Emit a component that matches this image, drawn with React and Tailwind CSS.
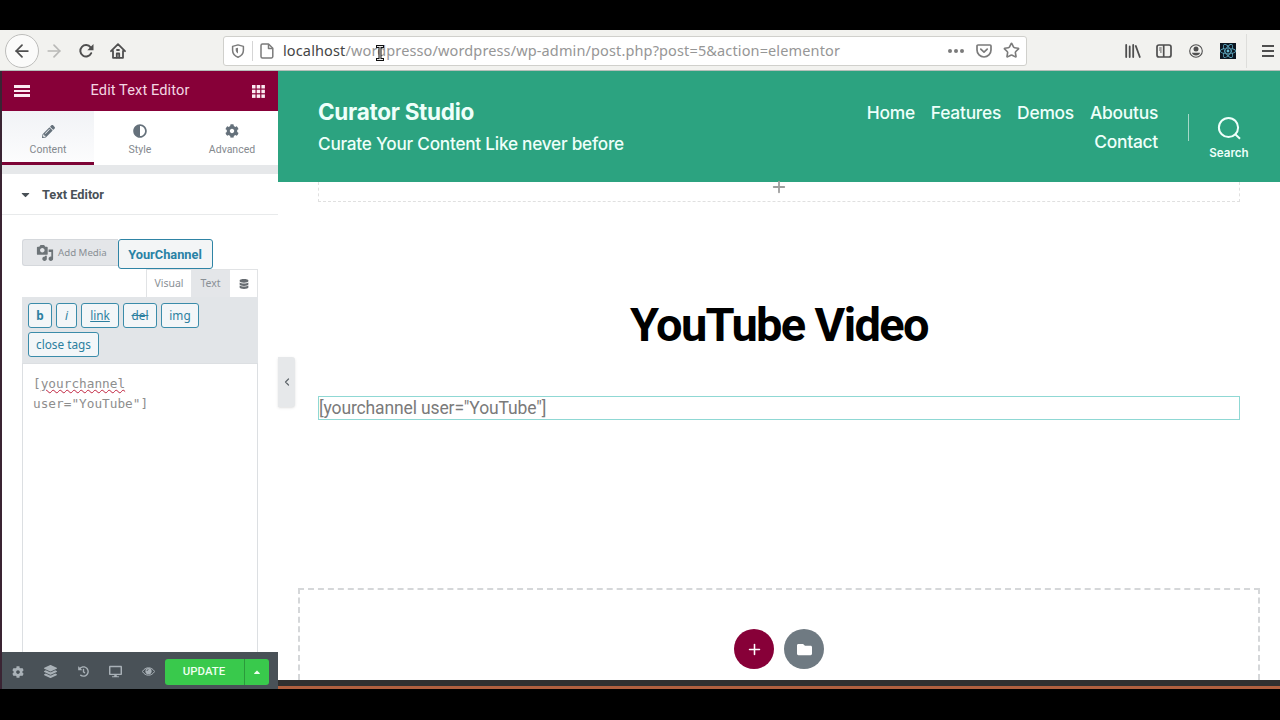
import {
  FaAdjust,
  FaCaretDown,
  FaCaretUp,
  FaCog,
  FaDatabase,
  FaDesktop,
  FaFolder,
  FaHistory,
  FaLayerGroup,
  FaPencilAlt,
  FaReact,
} from "react-icons/fa";
import { ArrowLeft, ArrowRight, ChevronLeft, Plus, Star } from "lucide-react";

const EyeIcon = () => (
  <svg width="13" height="9" viewBox="0 0 13 9">
    <path d="M.4 4.5C2 2 4 .8 6.5.8S11 2 12.6 4.5C11 7 9 8.2 6.5 8.2S2 7 .4 4.5z" fill="none" stroke="currentColor" strokeWidth="1" />
    <circle cx="6.5" cy="4.2" r="3.1" fill="currentColor" />
    <path d="M5 4a1.5 1.5 0 0 1 1.5-1.5" fill="none" stroke="#495157" strokeWidth=".8" />
  </svg>
);

const tabs = [
  { id: "content", label: "Content", icon: <FaPencilAlt size={13} /> },
  { id: "style", label: "Style", icon: <FaAdjust size={14} /> },
  { id: "advanced", label: "Advanced", icon: <FaCog size={14} /> },
];

const quickTags = [
  { label: "b", className: "w-[24px] font-bold" },
  { label: "i", className: "w-[21px] italic" },
  { label: "link", className: "w-[38px] underline" },
  { label: "del", className: "w-[34px] line-through" },
  { label: "img", className: "w-[38px]" },
  { label: "close tags", className: "w-[71px]" },
];

const footerIcons = [
  { id: "settings", icon: <FaCog size={12} /> },
  { id: "navigator", icon: <FaLayerGroup size={13} /> },
  { id: "history", icon: <FaHistory size={11} /> },
  { id: "responsive", icon: <FaDesktop size={13} /> },
  { id: "preview", icon: <EyeIcon /> },
];

const menu = ["Home", "Features", "Demos", "Aboutus", "Contact"];

const ReloadIcon = () => (
  <svg width="16" height="16" viewBox="0 0 16 16" fill="none" stroke="currentColor" strokeWidth="2">
    <path d="M13.2 10.2A5.7 5.7 0 1 1 12.6 4.4" strokeLinecap="round" />
    <path d="M15.5 1v6.2H9.3z" fill="currentColor" stroke="none" />
  </svg>
);

const HomeIcon = () => (
  <svg width="16" height="16" viewBox="0 0 16 16" fill="none" stroke="currentColor" strokeWidth="1.8" strokeLinejoin="round" strokeLinecap="round">
    <path d="M1 8.2 8 1.2l7 7M3 8v6.8h10V8" />
    <path d="M6.8 14.5v-4h2.4v4" />
    <path d="M7 7h2" />
  </svg>
);

const ShieldIcon = () => (
  <svg width="14" height="14" viewBox="0 0 14 14" fill="none" stroke="currentColor" strokeWidth="1.5" strokeLinejoin="round">
    <path d="M7 .9 12.4 2.4v3.8c0 3.3-2 5.6-5.4 7-3.4-1.4-5.4-3.7-5.4-7V2.4z" />
    <path d="M7 3.8v5.8C5.5 8.6 4.7 7.4 4.7 5.8V4.3z" fill="currentColor" stroke="none" />
  </svg>
);

const PageIcon = () => (
  <svg width="14" height="16" viewBox="0 0 14 16" fill="none" stroke="currentColor" strokeWidth="1.5" strokeLinejoin="round">
    <path d="M2.5 1h6l4.3 4.2v8.3a1.5 1.5 0 0 1-1.5 1.5H2.5A1.5 1.5 0 0 1 1 13.5v-11A1.5 1.5 0 0 1 2.5 1z" />
    <path d="M8.5 1.2v4.3h4.2" />
  </svg>
);

const PocketIcon = () => (
  <svg width="16" height="14" viewBox="0 0 16 14" fill="none" stroke="currentColor" strokeWidth="1.7" strokeLinejoin="round" strokeLinecap="round">
    <path d="M2 1h12a1 1 0 0 1 1 1v4a7 7 0 0 1-14 0V2a1 1 0 0 1 1-1z" />
    <path d="m4.8 5.2 3.2 3 3.2-3" />
  </svg>
);

const LibraryIcon = () => (
  <svg width="16" height="14" viewBox="0 0 16 14" fill="none" stroke="currentColor" strokeWidth="1.8" strokeLinecap="round">
    <path d="M1.2 1v12M4.7 2.500V13M8.2 1v12M10.8 2l4 11" />
  </svg>
);

const SidebarIcon = () => (
  <svg width="16" height="14" viewBox="0 0 16 14" fill="none" stroke="currentColor" strokeWidth="1.7">
    <rect x="1" y="1" width="14" height="12" rx="2" />
    <path d="M7.7 1v12" />
    <path d="M3.2 4h2.5M3.2 6h2.5M4 8h1.7" strokeWidth="1" />
  </svg>
);

const AccountIcon = () => (
  <svg width="14" height="14" viewBox="0 0 14 14">
    <circle cx="7" cy="7" r="6.3" fill="none" stroke="currentColor" strokeWidth="1.1" />
    <circle cx="7" cy="5" r="2.5" fill="currentColor" />
    <path d="M2.9 8.8h8.2c-.6 1.7-2 2.6-4.1 2.6S3.5 10.5 2.9 8.8z" fill="currentColor" />
  </svg>
);

const MediaIcon = () => (
  <svg width="18" height="18" viewBox="0 0 20 20" fill="currentColor">
    <path d="M13 11V4c0-.55-.45-1-1-1h-1.670L9 1H5L3.670 3H2c-.55 0-1 .45-1 1v7c0 .55.45 1 1 1h10c.55 0 1-.45 1-1zM7 4.500c1.380 0 2.500 1.120 2.500 2.500S8.380 9.500 7 9.500 4.500 8.380 4.500 7 5.620 4.500 7 4.500zM14 6h5v10.500c0 1.380-1.120 2.500-2.500 2.500S14 17.880 14 16.500s1.120-2.500 2.500-2.500c.17 0 .34.02.5.05V9h-3V6zm-4 8.050V13h2v3.500c0 1.380-1.120 2.500-2.500 2.500S7 17.880 7 16.500 8.120 14 9.500 14c.17 0 .34.02.5.05z" fillRule="evenodd" />
  </svg>
);

const GridIcon = () => (
  <svg width="13" height="13" viewBox="0 0 13 13" fill="currentColor">
    {[0, 4.7, 9.4].map((y) =>
      [0, 4.7, 9.4].map((x) => <rect key={`${x}-${y}`} x={x} y={y} width="3.5" height="3.5" />)
    )}
  </svg>
);

const SearchIcon = () => (
  <svg width="24" height="24" viewBox="0 0 24 24" fill="none" stroke="currentColor" strokeWidth="2">
    <circle cx="11.5" cy="11.5" r="9.6" />
    <path d="m18 18 5 4.7" />
  </svg>
);

const TextCursor = () => (
  <svg width="8" height="16" viewBox="0 0 8 16" fill="none">
    <path d="M0 1.5h8M4 1.5v13M0 14.5h8" stroke="#111" strokeWidth="3" />
    <path d="M1 1.5h6M4 1.5v13M1 14.5h6" stroke="#e8e8e8" strokeWidth="1" />
  </svg>
);

const BrowserBar = () => (
  <div className="flex h-[41px] shrink-0 items-center border-b border-[#b5bfba] bg-[#f2f2ef] pl-[5px] pt-px text-[#4f4f4f]">
    <div className="flex size-[34px] shrink-0 items-center justify-center rounded-full border border-[#bdbdbb] bg-[#fbfbfa]">
      <ArrowLeft size={20} strokeWidth={2.1} />
    </div>
    <ArrowRight size={20} strokeWidth={2} className="ml-[5px] shrink-0 text-[#b9b9b7]" />
    <div className="ml-[14px] shrink-0"><ReloadIcon /></div>
    <div className="ml-[16px] shrink-0"><HomeIcon /></div>
    <div className="relative ml-[97px] flex h-[30px] w-[804px] shrink-0 items-center rounded-[3px] border border-[#d0d0cc] bg-white pl-[7px] text-[#7b7b7b]">
      <ShieldIcon />
      <div className="ml-[7px] h-[20px] w-px bg-[#d5d5d5]" />
      <div className="ml-[7px]"><PageIcon /></div>
      <p className="ml-[9px] flex-1 whitespace-nowrap pt-px font-['Noto_Sans',sans-serif] text-[14.5px] tracking-[0.13px] text-[#969696]">
        <span className="text-[#454545]">localhost</span>
        /wordpresso/wordpress/wp-admin/post.php?post=5&amp;action=elementor
      </p>
      <div className="flex items-center gap-[2px]">
        <i className="size-[4px] rounded-full bg-current" />
        <i className="size-[4px] rounded-full bg-current" />
        <i className="size-[4px] rounded-full bg-current" />
      </div>
      <div className="ml-[12px]"><PocketIcon /></div>
      <Star size={17} strokeWidth={2.3} className="ml-[11px] mr-[6px]" />
      <div className="absolute left-[152px] top-[8px]"><TextCursor /></div>
    </div>
    <div className="ml-[98px] shrink-0"><LibraryIcon /></div>
    <div className="ml-[15px] shrink-0"><SidebarIcon /></div>
    <div className="ml-[17px] shrink-0"><AccountIcon /></div>
    <div className="ml-[17px] flex size-[16px] shrink-0 items-center justify-center bg-[#0d1722] text-[#68bcd6]">
      <FaReact size={16} />
    </div>
    <div className="ml-[10px] h-[34px] w-px shrink-0 bg-[#dededb]" />
    <div className="ml-[15px] flex shrink-0 flex-col gap-[3px]">
      <i className="h-[2px] w-[12px] bg-current" />
      <i className="h-[2px] w-[12px] bg-current" />
      <i className="h-[2px] w-[12px] bg-current" />
    </div>
  </div>
);

const EditorPanel = () => (
  <aside className="flex w-[278px] shrink-0 flex-col border-l-2 border-[#3a2433] bg-white font-[Roboto,sans-serif]">
    <header className="flex h-[40px] shrink-0 items-center justify-between bg-[#870038] pl-[12px] pr-[13px] text-[#fbeaf1]">
      <div className="flex flex-col gap-[2px]">
        <i className="h-[2.5px] w-[16px] bg-current" />
        <i className="h-[2.5px] w-[16px] bg-current" />
        <i className="h-[2.5px] w-[16px] bg-current" />
      </div>
      <h1 className="pr-[2px] text-[14.6px] tracking-[0.1px] text-[#f3d6e2]">Edit Text Editor</h1>
      <GridIcon />
    </header>

    <nav className="flex h-[54px] shrink-0 text-[#65717b]">
      {tabs.map((tab) => (
        <div
          key={tab.id}
          className={`flex flex-1 flex-col items-center border-b-[3px] pt-[13px] ${
            tab.id === "content" ? "border-[#7d0335] bg-linear-to-b from-[#f1f3f6] to-[#fcfcfd]" : "border-white"
          }`}
        >
          <span className="flex h-[14px] items-center">{tab.icon}</span>
          <span className="mt-[5px] text-[10.5px] leading-[13px] text-[#84898e]">{tab.label}</span>
        </div>
      ))}
    </nav>

    <div className="h-[9px] shrink-0 bg-[#e6e8ea]" />

    <div className="flex h-[41px] shrink-0 items-center border-b border-[#e8eaeb] pl-[17px] text-[#495157]">
      <FaCaretDown size={13} />
      <h2 className="ml-[10px] pt-px text-[12.8px] font-bold">Text Editor</h2>
    </div>

    <div className="flex min-h-0 flex-1 flex-col pl-[20px] pr-[20px] pt-[24px]">
      <div className="flex h-[30px] shrink-0 items-start">
        <button className="flex h-[27px] w-[96px] items-center rounded-l-[3px] border border-r-0 border-[#d5d8dc] bg-[#e4e6e9] pl-[13px] pt-px text-[#6d7478]">
          <MediaIcon />
          <span className="ml-[4px] whitespace-nowrap font-['Noto_Sans',sans-serif] text-[9.7px] text-[#898f95]">Add Media</span>
        </button>
        <button className="h-[30px] w-[95px] rounded-[3px] border border-[#2f84a5] bg-[#f3f5f6] pr-px pt-px text-[12.8px] font-bold text-[#2982a5]">
          YourChannel
        </button>
      </div>

      <div className="flex h-[28px] shrink-0 self-end border border-b-0 border-[#e1e3e5] font-['Noto_Sans',sans-serif] text-[10.5px] text-[#8a9096]">
        <div className="flex w-[44px] items-center justify-center">Visual</div>
        <div className="flex w-[39px] items-center justify-center bg-[#e4e6e9]">Text</div>
        <div className="flex w-[27px] items-center justify-center text-[#666b70]"><FaDatabase size={10} /></div>
      </div>

      <div className="flex h-[66px] w-[236px] shrink-0 flex-wrap content-start gap-[4px] bg-[#e2e5e8] pl-[6px] pt-[6px]">
        {quickTags.map((tag) => (
          <button
            key={tag.label}
            className={`h-[25px] rounded-[3px] border border-[#3b8caa] bg-[#f3f6f8] font-['Noto_Sans',sans-serif] text-[11.8px] leading-[21px] text-[#2c7f9f] ${tag.className}`}
          >
            {tag.label}
          </button>
        ))}
      </div>

      <div className="w-[236px] flex-1 border border-b-0 border-[#dcdfe2] pl-[10px] pt-[10px] font-['DejaVu_Sans_Mono',monospace] text-[12.75px] leading-[20px] text-[#8e8e8e]">
        [<span className="underline decoration-[#c0223e] decoration-wavy decoration-[1.2px] underline-offset-1">yourchannel</span>
        <br />
        user=&quot;YouTube&quot;]
      </div>
    </div>

    <footer className="flex h-[37px] shrink-0 items-center bg-[#495157] pt-[2px] text-[#a9b1b7]">
      {footerIcons.map((item) => (
        <div key={item.id} className="flex w-[32.5px] items-center justify-center">{item.icon}</div>
      ))}
      <button className="flex h-[26px] w-[79px] items-center justify-center rounded-l-[3px] bg-[#39c94c] pt-px text-[11.4px] font-medium text-[#effff0]">
        UPDATE
      </button>
      <button className="flex h-[26px] w-[25px] items-center justify-center rounded-r-[3px] border-l border-[#2b9a3b] bg-[#39c94c] text-[#effff0]">
        <FaCaretUp size={10} />
      </button>
    </footer>
  </aside>
);

const SiteHeader = () => (
  <header className="flex h-[111px] shrink-0 bg-[#2ca380] pl-[40px] font-[Inter,sans-serif] text-[#eefffa]">
    <div className="w-[540px] pt-[26px]">
      <h2 className="text-[22.5px] font-bold leading-[30px] tracking-[-0.28px]">Curator Studio</h2>
      <p className="mt-[4px] text-[17.2px] font-[450] leading-[26px] tracking-[-0.23px]">Curate Your Content Like never before</p>
    </div>
    <ul className="flex w-[300px] flex-wrap content-start justify-end gap-x-[16px] pt-[27px] text-[17.4px] font-[450] leading-[29px] tracking-[-0.25px]">
      {menu.map((item) => (
        <li key={item}>{item}</li>
      ))}
    </ul>
    <div className="ml-[30px] mt-[43px] h-[27px] w-px bg-[#a6d8c9]" />
    <div className="ml-[20px] flex w-[40px] flex-col items-center pt-[45px]">
      <SearchIcon />
      <span className="mt-[5px] text-[11.6px] font-semibold leading-[16px]">Search</span>
    </div>
  </header>
);

const Preview = () => (
  <main className="relative flex min-w-0 flex-1 flex-col bg-white">
    <SiteHeader />
    <div className="mx-[40px] flex h-[20px] shrink-0 justify-center border border-t-0 border-dashed border-[#e0e0e0]">
      <Plus size={18} strokeWidth={2.4} className="-mt-[4px] text-[#9e9e9e]" />
    </div>

    <h1 className="mt-[95px] text-center font-[Roboto,sans-serif] text-[47px] font-bold leading-[56px] tracking-[-1.65px] text-black">
      YouTube Video
    </h1>
    <div className="mx-[40px] mt-[43px] h-[24px] shrink-0 border border-[#8fd8d4] font-[Roboto,sans-serif] text-[17.5px] leading-[22px] tracking-[-0.13px] text-[#7a7a7a]">
      [yourchannel user=&quot;YouTube&quot;]
    </div>

    <div className="mx-[20px] mt-[168px] flex flex-1 justify-center gap-[10px] border-2 border-b-0 border-dashed border-[#d5d7d9] pt-[39px]">
      <button className="flex size-[40px] items-center justify-center rounded-full bg-[#870038] text-white">
        <Plus size={17} strokeWidth={2.2} />
      </button>
      <button className="flex size-[40px] items-center justify-center rounded-full bg-[#6f7a82] text-white">
        <FaFolder size={15} />
      </button>
    </div>
    <div className="h-[6px] shrink-0 bg-[#303030]" />
    <div className="h-[3px] shrink-0 bg-[#b0603f]" />

    <div className="absolute left-0 top-[286px] flex h-[50px] w-[17px] items-center justify-center rounded-r-[3px] bg-[#e6e8ea] text-[#5f666b] shadow-sm">
      <ChevronLeft size={12} strokeWidth={2.4} />
    </div>
  </main>
);

const App = () => (
  <div className="flex h-[720px] w-[1280px] flex-col overflow-hidden bg-black pb-[31px] pt-[30px]">
    <BrowserBar />
    <div className="flex min-h-0 flex-1">
      <EditorPanel />
      <Preview />
    </div>
  </div>
);

export default App;
